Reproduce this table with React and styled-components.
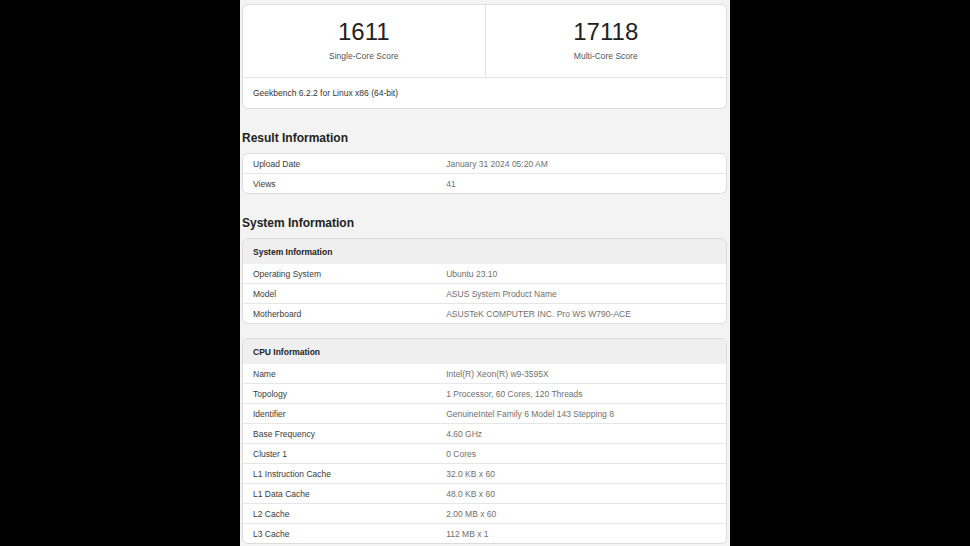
import React from 'react';
import styled, { createGlobalStyle } from 'styled-components';

const GlobalStyle = createGlobalStyle`
  html, body {
    margin: 0;
    padding: 0;
    background: #000;
  }
  body {
    font-family: "Liberation Sans", Arial, sans-serif;
  }
`;

const Page = styled.div`
  width: 490px;
  min-height: 100vh;
  margin: 0 auto;
  background: #f3f3f3;
  padding: 4px 3px 0 2px;
  box-sizing: border-box;
`;

const Card = styled.div`
  background: #fff;
  border: 1px solid #dcdcdc;
  border-radius: 6px;
  overflow: hidden;
  margin-bottom: ${props => props.$gap || 0}px;
`;

const ScoreRow = styled.div`
  display: grid;
  grid-template-columns: 1fr 1fr;
  border-bottom: 1px solid #e3e3e3;
`;

const Score = styled.div`
  display: flex;
  flex-direction: column;
  align-items: center;
  padding: 13px 0 15px;
  & + & {
    border-left: 1px solid #e3e3e3;
  }
`;

const ScoreValue = styled.div`
  font-size: 24px;
  line-height: 28px;
  color: #222;
`;

const ScoreLabel = styled.div`
  margin-top: 4px;
  font-size: 8.5px;
  line-height: 12px;
  color: #555;
`;

const Footer = styled.div`
  height: 30px;
  display: flex;
  align-items: center;
  padding: 0 10px;
  font-size: 8.5px;
  color: #333;
`;

const Heading = styled.h2`
  margin: 22px 0 7px;
  font-size: 12px;
  line-height: 15px;
  font-weight: bold;
  color: #222;
`;

const CardHeader = styled.div`
  height: 25px;
  display: flex;
  align-items: center;
  padding: 0 10px;
  background: #efefef;
  font-size: 8.5px;
  font-weight: bold;
  color: #222;
`;

const Row = styled.div`
  display: grid;
  grid-template-columns: 40% 1fr;
  height: 19px;
  align-items: center;
  font-size: 8.5px;
  & + & {
    border-top: 1px solid #e6e6e6;
  }
`;

const Label = styled.div`
  padding-left: 10px;
  color: #3a3a3a;
`;

const Value = styled.div`
  padding-left: 10px;
  color: #707070;
`;

const InfoTable = ({ title, rows, gap }) => (
  <Card $gap={gap}>
    {title && <CardHeader>{title}</CardHeader>}
    {rows.map(([k, v]) => (
      <Row key={k}>
        <Label>{k}</Label>
        <Value>{v}</Value>
      </Row>
    ))}
  </Card>
);

const resultRows = [
  ['Upload Date', 'January 31 2024 05:20 AM'],
  ['Views', '41'],
];

const systemRows = [
  ['Operating System', 'Ubuntu 23.10'],
  ['Model', 'ASUS System Product Name'],
  ['Motherboard', 'ASUSTeK COMPUTER INC. Pro WS W790-ACE'],
];

const cpuRows = [
  ['Name', 'Intel(R) Xeon(R) w9-3595X'],
  ['Topology', '1 Processor, 60 Cores, 120 Threads'],
  ['Identifier', 'GenuineIntel Family 6 Model 143 Stepping 8'],
  ['Base Frequency', '4.60 GHz'],
  ['Cluster 1', '0 Cores'],
  ['L1 Instruction Cache', '32.0 KB x 60'],
  ['L1 Data Cache', '48.0 KB x 60'],
  ['L2 Cache', '2.00 MB x 60'],
  ['L3 Cache', '112 MB x 1'],
];

export default function App() {
  return (
    <>
      <GlobalStyle />
      <Page>
        <Card>
          <ScoreRow>
            <Score>
              <ScoreValue>1611</ScoreValue>
              <ScoreLabel>Single-Core Score</ScoreLabel>
            </Score>
            <Score>
              <ScoreValue>17118</ScoreValue>
              <ScoreLabel>Multi-Core Score</ScoreLabel>
            </Score>
          </ScoreRow>
          <Footer>Geekbench 6.2.2 for Linux x86 (64-bit)</Footer>
        </Card>

        <Heading>Result Information</Heading>
        <InfoTable rows={resultRows} />

        <Heading>System Information</Heading>
        <InfoTable title="System Information" rows={systemRows} gap={14} />
        <InfoTable title="CPU Information" rows={cpuRows} />
      </Page>
    </>
  );
}
